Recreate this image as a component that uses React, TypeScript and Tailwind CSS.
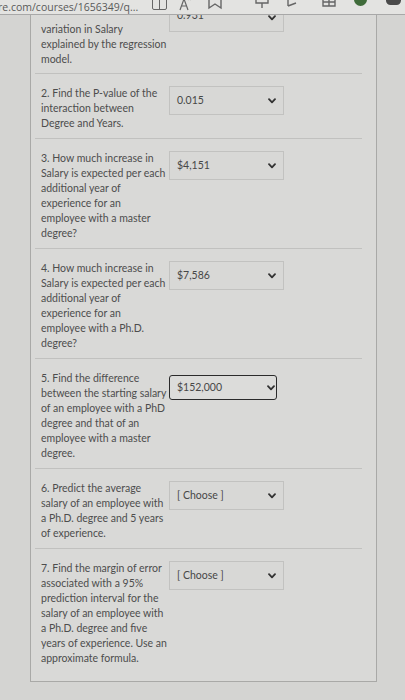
import React from 'react';

type Item = {
  lines: string[];
  value: string;
  active?: boolean;
};

const items: Item[] = [
  {
    lines: ['2. Find the P-value of the', 'interaction between', 'Degree and Years.'],
    value: '0.015',
  },
  {
    lines: [
      '3. How much increase in',
      'Salary is expected per each',
      'additional year of',
      'experience for an',
      'employee with a master',
      'degree?',
    ],
    value: '$4,151',
  },
  {
    lines: [
      '4. How much increase in',
      'Salary is expected per each',
      'additional year of',
      'experience for an',
      'employee with a Ph.D.',
      'degree?',
    ],
    value: '$7,586',
  },
  {
    lines: [
      '5. Find the difference',
      'between the starting salary',
      'of an employee with a PhD',
      'degree and that of an',
      'employee with a master',
      'degree.',
    ],
    value: '$152,000',
    active: true,
  },
  {
    lines: [
      '6. Predict the average',
      'salary of an employee with',
      'a Ph.D. degree and 5 years',
      'of experience.',
    ],
    value: '[ Choose ]',
  },
  {
    lines: [
      '7. Find the margin of error',
      'associated with a 95%',
      'prediction interval for the',
      'salary of an employee with',
      'a Ph.D. degree and five',
      'years of experience. Use an',
      'approximate formula.',
    ],
    value: '[ Choose ]',
  },
];

const Chevron = () => (
  <svg width="8" height="6" viewBox="0 0 8 6" className="shrink-0">
    <polyline points="1,1.2 4,4.4 7,1.2" fill="none" stroke="#333" strokeWidth="1.8" strokeLinecap="round" strokeLinejoin="round" />
  </svg>
);

const Select = ({ value, active }: { value: string; active?: boolean }) =>
  active ? (
    <div className="mt-[4px] flex h-[25px] w-[108px] shrink-0 items-center justify-between rounded-[3px] border-[1.5px] border-[#2b2b2b] bg-[#dcdcda] pl-[7px] pr-[1px]">
      <span className="text-[10.5px] text-[#474747]">{value}</span>
      <Chevron />
    </div>
  ) : (
    <div className="flex h-[29px] w-[115px] shrink-0 items-center justify-between border border-[#c2c2c0] bg-[#d8d8d6] pl-[7px] pr-[7px]">
      <span className="text-[10.5px] text-[#474747]">{value}</span>
      <Chevron />
    </div>
  );

const Lines = ({ lines }: { lines: string[] }) => (
  <div className="w-[128px] shrink-0 text-[10.5px] leading-[15px] text-[#4d4d4d]">
    {lines.map((l) => (
      <div key={l} className="whitespace-nowrap">
        {l}
      </div>
    ))}
  </div>
);

const App: React.FC = () => {
  return (
    <div
      className="flex h-[700px] w-[405px] flex-col overflow-hidden bg-[#d4d4d2]"
      style={{ fontFamily: 'Lato, "Open Sans", sans-serif' }}
    >
      {/* Browser bar */}
      <div className="relative z-10 flex h-[15px] shrink-0 items-center overflow-hidden border-b border-[#a8a8a8] bg-[#e3e3e1]">
        <span
          className="-ml-[2px] text-[10.5px] leading-[14px] text-[#5a5a5a]"
          style={{ fontFamily: '"Open Sans", sans-serif' }}
        >
          re.com/courses/1656349/q...
        </span>
        <div className="absolute left-[152px] top-[-5px] h-[15px] w-[15px] rounded-[2px] border border-[#666]">
          <div className="mx-auto h-full w-px bg-[#666]" />
        </div>
        <svg className="absolute left-[178px] top-[-4px]" width="14" height="16" viewBox="0 0 14 16">
          <path d="M2 14L6 3l4 11M3.5 10h5M10 4l1.5-2 1.5 2" fill="none" stroke="#666" strokeWidth="1.2" />
        </svg>
        <svg className="absolute left-[207px] top-[-6px]" width="16" height="16" viewBox="0 0 16 16">
          <path d="M2 2v12l6-4 6 4V2" fill="none" stroke="#666" strokeWidth="1.4" />
        </svg>
        <svg className="absolute left-[254px] top-[-6px]" width="16" height="16" viewBox="0 0 16 16">
          <path d="M2 4h12v5H2zM8 9v5" fill="none" stroke="#666" strokeWidth="1.4" />
        </svg>
        <svg className="absolute left-[285px] top-[-6px]" width="16" height="16" viewBox="0 0 16 16">
          <path d="M3 2v10M3 12l8-3" fill="none" stroke="#666" strokeWidth="1.4" />
        </svg>
        <svg className="absolute left-[321px] top-[-6px]" width="16" height="16" viewBox="0 0 16 16">
          <path d="M2 3h12v9H2zM8 3v9M2 8h12" fill="none" stroke="#666" strokeWidth="1.4" />
        </svg>
        <div className="absolute left-[354px] top-[-7px] h-[13px] w-[13px] rounded-full bg-[#3f6b3a]" />
        <div className="absolute left-[386px] top-[-4px] h-[9px] w-[15px] rounded-full bg-[#4a4a4a]" />
      </div>

      {/* Content */}
      <div className="flex-1 overflow-hidden pl-[30px] pr-[28px]">
        <div className="border-x border-b border-[#a9a9a7] bg-[#d9d9d7] pb-[8px]">
          {/* first item, scrolled partly out of view */}
          <div className="ml-[4px] mr-[14px] flex border-b border-[#c1c1bf] pb-[6px]">
            <div className="w-[6px]" />
            <div className="pt-[7px]">
              <Lines lines={['variation in Salary', 'explained by the regression', 'model.']} />
            </div>
            <div className="-mt-[11px]">
              <div className="flex h-[28px] w-[115px] items-end justify-between border border-[#c2c2c0] bg-[#d8d8d6] pb-[10px] pl-[7px] pr-[7px]">
                <span className="text-[10.5px] leading-[11px] text-[#474747]">0.931</span>
                <Chevron />
              </div>
            </div>
          </div>

          {items.map((it, i) => (
            <div
              key={i}
              className={`ml-[4px] mr-[14px] flex pb-[7px] pt-[12px] ${i < items.length - 1 ? 'border-b border-[#c1c1bf]' : ''}`}
            >
              <div className="w-[6px]" />
              <Lines lines={it.lines} />
              <Select value={it.value} active={it.active} />
            </div>
          ))}
        </div>
      </div>
    </div>
  );
};

export default App;
